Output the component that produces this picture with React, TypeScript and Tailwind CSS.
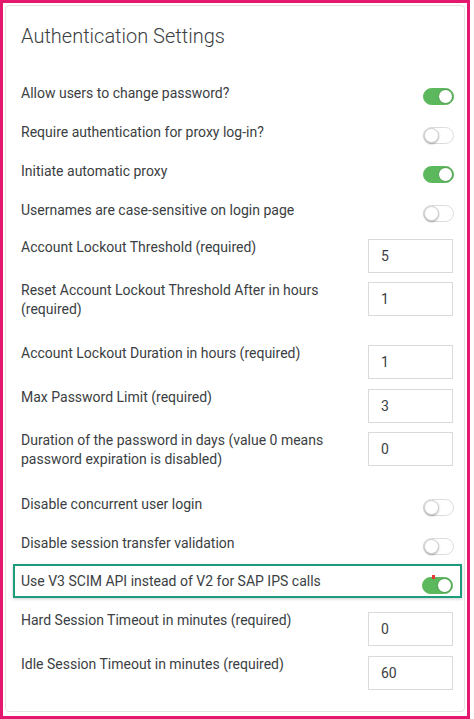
const font = "font-['Roboto','Liberation_Sans',sans-serif]";

type Row =
  | { kind: "toggle"; label: string; on: boolean; h: string; highlight?: boolean }
  | { kind: "input"; label: string[]; value: string; h: string };

const rows: Row[] = [
  { kind: "toggle", label: "Allow users to change password?", on: true, h: "h-[39px]" },
  { kind: "toggle", label: "Require authentication for proxy log-in?", on: false, h: "h-[39px]" },
  { kind: "toggle", label: "Initiate automatic proxy", on: true, h: "h-[39px]" },
  { kind: "toggle", label: "Usernames are case-sensitive on login page", on: false, h: "h-[39px]" },
  { kind: "input", label: ["Account Lockout Threshold (required)"], value: "5", h: "h-[43px]" },
  { kind: "input", label: ["Reset Account Lockout Threshold After in hours", "(required)"], value: "1", h: "h-[63px]" },
  { kind: "input", label: ["Account Lockout Duration in hours (required)"], value: "1", h: "h-[44px]" },
  { kind: "input", label: ["Max Password Limit (required)"], value: "3", h: "h-[43px]" },
  { kind: "input", label: ["Duration of the password in days (value 0 means", "password expiration is disabled)"], value: "0", h: "h-[62px]" },
  { kind: "toggle", label: "Disable concurrent user login", on: false, h: "h-[39px]" },
  { kind: "toggle", label: "Disable session transfer validation", on: false, h: "h-[39px]" },
  { kind: "toggle", label: "Use V3 SCIM API instead of V2 for SAP IPS calls", on: true, h: "h-[39px]", highlight: true },
  { kind: "input", label: ["Hard Session Timeout in minutes (required)"], value: "0", h: "h-[44px]" },
  { kind: "input", label: ["Idle Session Timeout in minutes (required)"], value: "60", h: "h-[44px]" },
];

function Toggle({ on, dot }: { on: boolean; dot?: boolean }) {
  return (
    <div
      className={
        "relative w-[31px] h-[17px] rounded-full border " +
        (on ? "bg-[#5cb85c] border-[#5cb85c]" : "bg-white border-[#dcdcdc]")
      }
    >
      <div
        className={
          "absolute top-[0px] w-[15px] h-[15px] rounded-full bg-white " +
          (on
            ? "right-[0px] border border-[#4a9a4a]"
            : "left-[0px] border border-[#cfcfcf] shadow-[0_1px_2px_rgba(0,0,0,0.3)]")
        }
      />
      {dot && <div className="absolute left-[9px] -top-[3px] w-[3px] h-[4px] bg-[#e53935]" />}
    </div>
  );
}

export default function App() {
  return (
    <div className={`w-[470px] h-[719px] border-[3px] border-[#e5186f] px-[2px] pt-[2px] bg-white ${font}`}>
      <div className="h-[707px] rounded-[4px] border border-[#e3e3e3] pl-[15px] pr-[11px] text-[#3b3e42]">
        <div className="h-[68px] pt-[18px]">
          <h1 className="text-[20px] leading-[24px] font-light">Authentication Settings</h1>
        </div>
        {rows.map((r, i) =>
          r.kind === "toggle" ? (
            <div key={i} className={r.h}>
              {r.highlight ? (
                <div className="-ml-[8px] -mr-[9px] mt-[1px] h-[34px] flex items-center justify-between border-2 border-[#1d9b7d] pl-[6px] pr-[7px] shadow-[0_1px_3px_rgba(0,0,0,0.2)]">
                  <span className="text-[14px] leading-[19px]">{r.label}</span>
                  <div className="translate-y-[4px]">
                    <Toggle on={r.on} dot />
                  </div>
                </div>
              ) : (
                <div className="h-full flex items-center justify-between">
                  <span className="text-[14px] leading-[19px]">{r.label}</span>
                  <div className="translate-y-[3px] -mr-[1px]">
                    <Toggle on={r.on} />
                  </div>
                </div>
              )}
            </div>
          ) : (
            <div key={i} className={`${r.h} pt-[9px] flex items-start justify-between`}>
              <div className="w-[330px] text-[14px] leading-[19px] -mt-[1px]">
                {r.label.map((l) => (
                  <div key={l}>{l}</div>
                ))}
              </div>
              <div className="w-[85px] h-[34px] border border-[#dadada] flex items-center pl-[12px] text-[14px]">
                {r.value}
              </div>
            </div>
          )
        )}
      </div>
    </div>
  );
}
